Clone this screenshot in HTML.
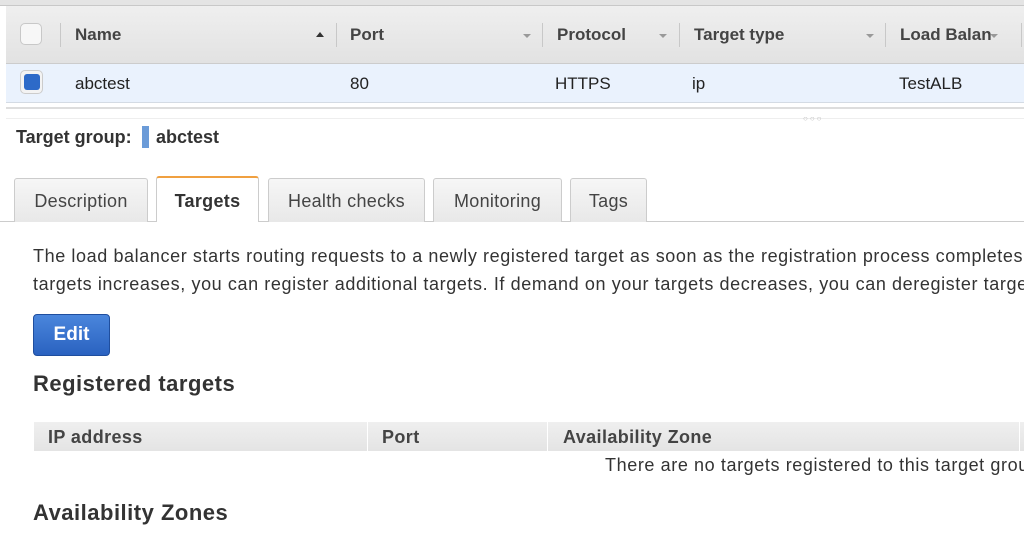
<!DOCTYPE html>
<html><head><meta charset="utf-8"><style>
*{margin:0;padding:0;box-sizing:border-box}
body{width:1024px;height:540px;overflow:hidden;background:#fff;font-family:"Liberation Sans",Arial,sans-serif;color:#333;position:relative}
.a{position:absolute;white-space:nowrap}
.hd{font-weight:bold;font-size:17px;color:#444}
.hd2{font-weight:bold;font-size:18px;color:#444;letter-spacing:0.4px}
.sep{position:absolute;width:1px;background:#c8c8c8}
.arr{position:absolute;width:0;height:0;border-left:4px solid transparent;border-right:4px solid transparent}
.tab{position:absolute;top:178px;height:44px;border:1px solid #ccc;border-bottom:none;border-radius:3px 3px 0 0;background:linear-gradient(#f6f6f6,#e8e8e8);font-size:18px;letter-spacing:0.3px;color:#444;text-align:center;line-height:44px}
.p{font-size:18px;letter-spacing:0.6px;color:#333}
.h2{font-size:22px;font-weight:bold;color:#333;letter-spacing:0.5px}
</style></head><body>
<div class="a" style="left:0;top:0;width:1024px;height:6px;background:#e4e4e4;border-bottom:1px solid #c8c8c8"></div>
<div class="a" style="left:6px;top:6px;width:1018px;height:58px;background:linear-gradient(#efefef,#e2e2e2);border-bottom:1px solid #ccc"></div>
<div class="a" style="left:20px;top:23px;width:22px;height:22px;border:1px solid #c8c8c8;border-radius:5px;background:#f7f7f7"></div>
<div class="sep" style="left:60px;top:23px;height:24px"></div>
<div class="a hd" style="left:75px;top:25px">Name</div>
<div class="arr" style="left:316px;top:32px;border-bottom:5px solid #333"></div>
<div class="sep" style="left:336px;top:23px;height:24px"></div>
<div class="a hd" style="left:350px;top:25px">Port</div>
<div class="arr" style="left:523px;top:34px;border-top:4px solid #999"></div>
<div class="sep" style="left:542px;top:23px;height:24px"></div>
<div class="a hd" style="left:557px;top:25px">Protocol</div>
<div class="arr" style="left:659px;top:34px;border-top:4px solid #999"></div>
<div class="sep" style="left:679px;top:23px;height:24px"></div>
<div class="a hd" style="left:694px;top:25px">Target type</div>
<div class="arr" style="left:866px;top:34px;border-top:4px solid #999"></div>
<div class="sep" style="left:885px;top:23px;height:24px"></div>
<div class="a hd" style="left:900px;top:25px;width:92px;overflow:hidden">Load Balancer</div>
<div class="arr" style="left:990px;top:34px;border-top:4px solid #999"></div>
<div class="sep" style="left:1021px;top:23px;height:24px"></div>
<div class="a" style="left:6px;top:64px;width:1018px;height:39px;background:#eaf2fd;border-bottom:1px solid #d4dbe4"></div>
<div class="a" style="left:20px;top:70px;width:23px;height:24px;border:1px solid #ccc;border-radius:5px;background:#f3f3f3"></div>
<div class="a" style="left:24px;top:74px;width:16px;height:16px;border-radius:3px;background:#2d6ac8"></div>
<div class="a" style="left:75px;top:74px;font-size:17px;color:#222">abctest</div>
<div class="a" style="left:350px;top:74px;font-size:17px;color:#222">80</div>
<div class="a" style="left:555px;top:74px;font-size:17px;color:#222">HTTPS</div>
<div class="a" style="left:692px;top:74px;font-size:17px;color:#222">ip</div>
<div class="a" style="left:899px;top:74px;font-size:17px;color:#222">TestALB</div>
<div class="a" style="left:6px;top:107px;width:1018px;height:2px;background:#ddd"></div>
<div class="a" style="left:6px;top:118px;width:1018px;height:1px;background:#eee"></div>
<div class="a" style="left:803px;top:114px;font-size:8px;color:#bbb;letter-spacing:2px">○○○</div>
<div class="a" style="left:16px;top:127px;font-size:18px;font-weight:bold;color:#333">Target group:</div>
<div class="a" style="left:142px;top:126px;width:7px;height:22px;background:#6b9bd8"></div>
<div class="a" style="left:156px;top:127px;font-size:18px;font-weight:bold;color:#333">abctest</div>
<div class="a" style="left:0;top:221px;width:1024px;height:1px;background:#ccc"></div>
<div class="tab" style="left:14px;width:134px">Description</div>
<div class="tab" style="left:156px;width:103px;top:176px;height:46px;background:#fff;border-top:2px solid #f0a040;font-weight:bold;color:#333;line-height:46px">Targets</div>
<div class="tab" style="left:268px;width:157px">Health checks</div>
<div class="tab" style="left:433px;width:129px">Monitoring</div>
<div class="tab" style="left:570px;width:77px">Tags</div>
<div class="a p" style="left:33px;top:246px">The load balancer starts routing requests to a newly registered target as soon as the registration process completes</div>
<div class="a p" style="left:33px;top:274px">targets increases, you can register additional targets. If demand on your targets decreases, you can deregister targets</div>
<div class="a" style="left:33px;top:314px;width:77px;height:42px;border-radius:4px;background:linear-gradient(#4a86dc,#2a62c0);border:1px solid #1f4e9e;color:#fff;font-weight:bold;font-size:19px;text-align:center;line-height:40px">Edit</div>
<div class="a h2" style="left:33px;top:371px">Registered targets</div>
<div class="a" style="left:34px;top:422px;width:990px;height:29px;background:linear-gradient(#efefef,#e4e4e4)"></div>
<div class="sep" style="left:367px;top:422px;height:29px;background:#fff"></div>
<div class="sep" style="left:547px;top:422px;height:29px;background:#fff"></div>
<div class="sep" style="left:1019px;top:422px;height:29px;background:#fff"></div>
<div class="a hd2" style="left:48px;top:427px">IP address</div>
<div class="a hd2" style="left:382px;top:427px">Port</div>
<div class="a hd2" style="left:563px;top:427px">Availability Zone</div>
<div class="a p" style="left:605px;top:455px">There are no targets registered to this target group</div>
<div class="a h2" style="left:33px;top:500px">Availability Zones</div>
</body></html>
